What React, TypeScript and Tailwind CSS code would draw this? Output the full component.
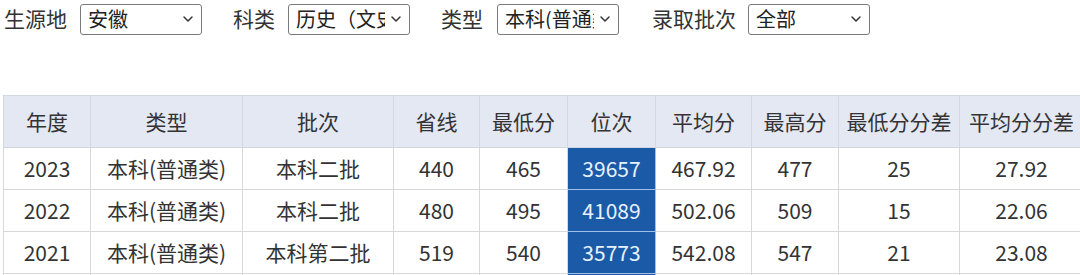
import { ChevronDown } from 'lucide-react'

const font = { fontFamily: '"Microsoft YaHei", "Noto Sans CJK SC", "Noto Sans", sans-serif' }

interface Row {
  year: string
  type: string
  batch: string
  line: string
  min: string
  rank: string
  avg: string
  max: string
  minDiff: string
  avgDiff: string
}

const rows: Row[] = [
  { year: '2023', type: '本科(普通类)', batch: '本科二批', line: '440', min: '465', rank: '39657', avg: '467.92', max: '477', minDiff: '25', avgDiff: '27.92' },
  { year: '2022', type: '本科(普通类)', batch: '本科二批', line: '480', min: '495', rank: '41089', avg: '502.06', max: '509', minDiff: '15', avgDiff: '22.06' },
  { year: '2021', type: '本科(普通类)', batch: '本科第二批', line: '519', min: '540', rank: '35773', avg: '542.08', max: '547', minDiff: '21', avgDiff: '23.08' },
  { year: '', type: '', batch: '', line: '', min: '', rank: '', avg: '', max: '', minDiff: '', avgDiff: '' },
]

const headers = ['年度', '类型', '批次', '省线', '最低分', '位次', '平均分', '最高分', '最低分分差', '平均分分差']
const widths = ['w-[87px]', 'w-[152px]', 'w-[151px]', 'w-[86px]', 'w-[88px]', 'w-[88px]', 'w-[96px]', 'w-[87px]', 'w-[121px]', 'w-[124px]']

function FakeSelect({ value, className }: { value: string; className: string }) {
  return (
    <div className={`flex h-[31px] w-[122px] items-center rounded-[3px] border border-[#7a7a7a] bg-white pl-[7px] pr-[5px] ${className}`}>
      <span className="flex-1 overflow-hidden whitespace-nowrap text-[20px] leading-none text-[#222]">{value}</span>
      <ChevronDown className="ml-[3px] h-[16px] w-[16px] shrink-0 text-[#333]" strokeWidth={2.2} />
    </div>
  )
}

export default function App() {
  return (
    <div className="h-[275px] w-[1080px] overflow-hidden bg-white text-[#333]" style={font}>
      {/* Filters */}
      <div className="flex h-[37px] items-center pl-[4px] pt-[1px] text-[21px]">
        <span>生源地</span>
        <FakeSelect value="安徽" className="ml-[13px]" />
        <span className="ml-[31px]">科类</span>
        <FakeSelect value="历史（文史类）" className="ml-[13px]" />
        <span className="ml-[31px]">类型</span>
        <FakeSelect value="本科(普通类)" className="ml-[14px]" />
        <span className="ml-[33px]">录取批次</span>
        <FakeSelect value="全部" className="ml-[12px]" />
      </div>

      {/* Table */}
      <table className="ml-[3px] mt-[58px] w-[1080px] table-fixed border-collapse text-center text-[21px]">
        <colgroup>
          {widths.map((w, i) => (
            <col key={i} className={w} />
          ))}
        </colgroup>
        <thead>
          <tr className="h-[52px] bg-[#e3e8f3]">
            {headers.map((h) => (
              <th key={h} className="border border-[#d3d8e0] px-0 font-normal whitespace-nowrap">
                {h}
              </th>
            ))}
          </tr>
        </thead>
        <tbody>
          {rows.map((r, i) => (
            <tr key={i} className="h-[42px]">
              <td className="border border-[#d8d8d8]">{r.year}</td>
              <td className="border border-[#d8d8d8] whitespace-nowrap">{r.type}</td>
              <td className="border border-[#d8d8d8] whitespace-nowrap">{r.batch}</td>
              <td className="border border-[#d8d8d8]">{r.line}</td>
              <td className="border border-[#d8d8d8]">{r.min}</td>
              <td className="border border-[#9fc0ea] bg-[#1b5aa6] text-[#e6f2ff]">{r.rank}</td>
              <td className="border border-[#d8d8d8]">{r.avg}</td>
              <td className="border border-[#d8d8d8]">{r.max}</td>
              <td className="border border-[#d8d8d8]">{r.minDiff}</td>
              <td className="border border-[#d8d8d8]">{r.avgDiff}</td>
            </tr>
          ))}
        </tbody>
      </table>
    </div>
  )
}
